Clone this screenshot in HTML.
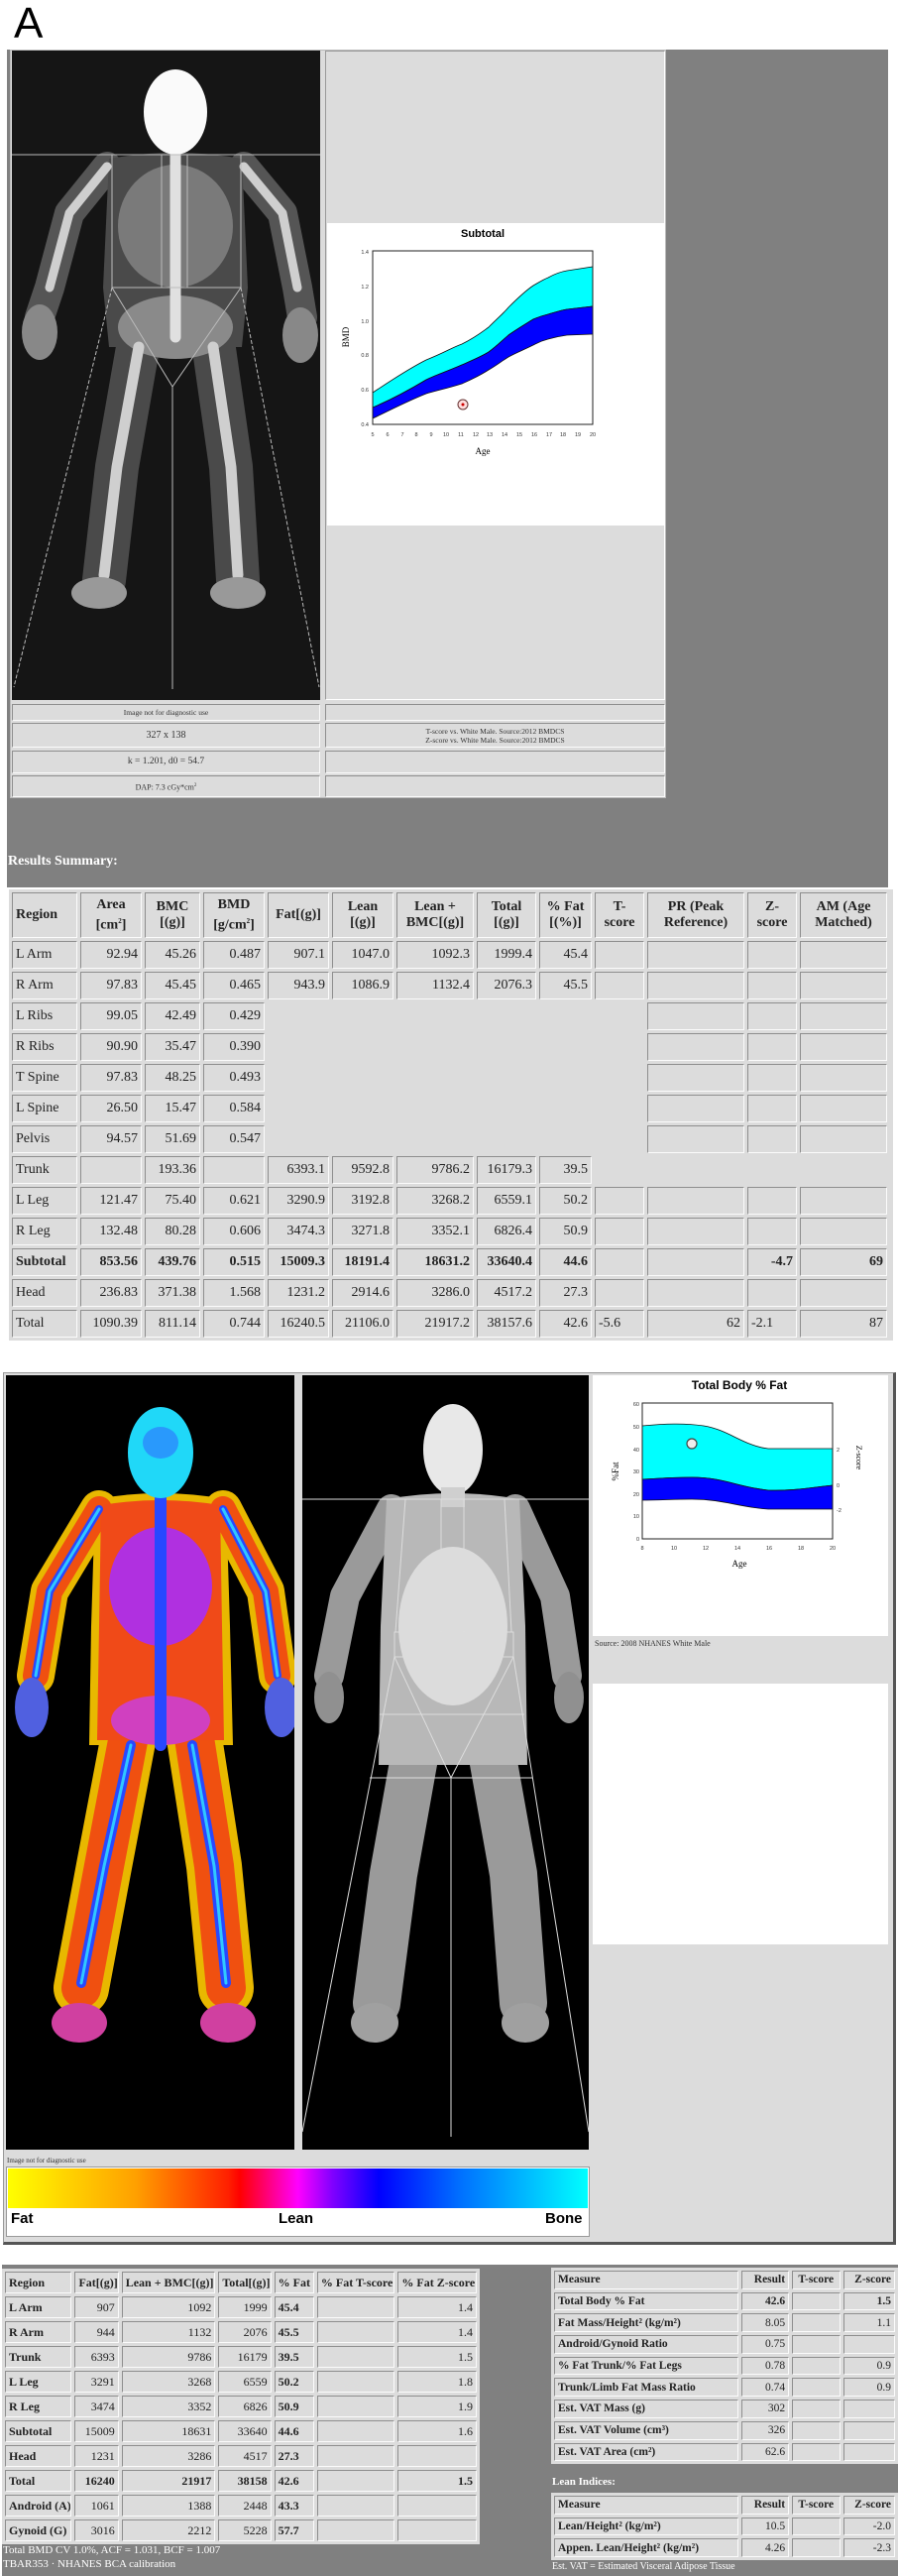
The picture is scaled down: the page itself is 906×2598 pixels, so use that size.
<!DOCTYPE html>
<html><head><meta charset="utf-8">
<style>
*{margin:0;padding:0;box-sizing:border-box}
body{width:906px;height:2598px;background:#fff;position:relative;overflow:hidden;font-family:"Liberation Serif",serif}
.a{position:absolute}
table{border-collapse:separate;border-spacing:3px;table-layout:fixed;background:#dcdcdc}
td{background:#dcdcdc;border:1px solid;border-color:#8e8e8e #fbfbfb #fbfbfb #8e8e8e;padding:0 3px;text-align:right;white-space:nowrap;overflow:hidden}
td.l{text-align:left}
td.c{text-align:center}
td.n{border:none}
.t1 td{font-size:14px;height:28px;color:#222}
.t1 tr.h td{height:46px;font-weight:bold;text-align:center;line-height:16px;white-space:normal}
.t1 tr.b td{font-weight:bold}
.t2 td{font-size:12px;height:22px;color:#222}
.t2 td.l{font-weight:bold}
.t2 tr.h td{font-weight:bold;text-align:left}
.t2 tr.b td{font-weight:bold}
.t3 td{font-size:11.5px;height:18.7px;color:#222}
.t3 td.l{font-weight:bold}
.t3 tr.h td{font-weight:bold}
.cell{position:absolute;background:#dcdcdc;border:1px solid;border-color:#8e8e8e #fbfbfb #fbfbfb #8e8e8e;font-size:9.5px;text-align:center;color:#333;line-height:1.2}
</style></head><body>

<div class="a" style="left:14px;top:2px;font:44px 'Liberation Sans',sans-serif;line-height:44px">A</div>

<!-- section A -->
<div class="a" style="left:7px;top:50px;width:889px;height:845px;background:#808080"></div>
<div class="a" style="left:10px;top:50px;width:662px;height:755px;background:#dcdcdc;border:1px solid #bbb"></div>
<div class="a" style="left:12px;top:51px;width:311px;height:655px;background:#151515"></div>
<div class="a" style="left:328px;top:51px;width:343px;height:655px;background:#dcdcdc;border:1px solid;border-color:#999 #fff #fff #999"></div>
<div class="a" style="left:330px;top:225px;width:340px;height:305px;background:#fff"></div>

<svg class="a" style="left:12px;top:51px" width="311" height="655" viewBox="12 51 311 655">
<g stroke-linecap="round" stroke-linejoin="round" fill="none">
<polyline points="108,168 70,215 50,290 40,320" stroke="#555" stroke-width="30"/>
<polyline points="246,168 285,215 300,290 305,320" stroke="#555" stroke-width="30"/>
<polyline points="140,345 118,471 105,585" stroke="#4a4a4a" stroke-width="44"/>
<polyline points="215,345 233,471 240,585" stroke="#4a4a4a" stroke-width="44"/>
</g>
<path d="M110,160 Q177,148 244,160 L250,290 L244,350 L110,350 L104,290 Z" fill="#4a4a4a"/>
<ellipse cx="177" cy="228" rx="58" ry="62" fill="#7a7a7a"/>
<ellipse cx="177" cy="330" rx="58" ry="32" fill="#8a8a8a"/>
<g stroke-linecap="round" stroke-linejoin="round" fill="none" stroke="#cfcfcf">
<polyline points="108,168 70,215 50,290" stroke-width="9"/>
<polyline points="246,168 285,215 300,290" stroke-width="9"/>
<polyline points="140,350 118,471 105,580" stroke-width="11"/>
<polyline points="215,350 233,471 240,580" stroke-width="11"/>
<line x1="177" y1="157" x2="177" y2="340" stroke-width="11" stroke="#e0e0e0"/>
</g>
<ellipse cx="40" cy="335" rx="18" ry="28" fill="#888"/>
<ellipse cx="303" cy="338" rx="18" ry="28" fill="#888"/>
<ellipse cx="100" cy="598" rx="28" ry="16" fill="#999"/>
<ellipse cx="240" cy="598" rx="28" ry="16" fill="#999"/>
<ellipse cx="177" cy="113" rx="32" ry="43" fill="#fafafa"/>
<g stroke="#bbb" stroke-width="1" fill="none">
<line x1="12" y1="156" x2="323" y2="156"/>
<rect x="113" y="156" width="130" height="134"/>
<line x1="163" y1="156" x2="163" y2="290"/><line x1="189" y1="156" x2="189" y2="290"/>
<polyline points="113,290 174,390 243,290"/>
<line x1="174" y1="390" x2="174" y2="695"/>
<line x1="113" y1="290" x2="14" y2="693" stroke-dasharray="4,2"/>
<line x1="243" y1="290" x2="322" y2="693" stroke-dasharray="4,2"/>
</g>
</svg>

<svg class="a" style="left:330px;top:225px" width="340" height="305" viewBox="330 225 340 305" font-family="Liberation Sans,sans-serif">
<text x="487" y="239" font-size="11" font-weight="bold" text-anchor="middle">Subtotal</text>
<path d="M376,396 C400,380 420,368 430,363 C450,355 455,351 466,347 C480,340 486,335 493,330 C503,320 508,316 513,310 C525,298 532,292 538,288 C545,284 548,282 553,280 C560,276 566,274 572,273 L598,269 L598,309 L572,312 C566,313 560,315 553,317 C545,319 543,320 538,322 C530,327 520,333 513,338 C505,345 500,350 493,355 C485,360 475,364 466,368 C450,375 440,378 430,383 C415,392 395,403 376,411 Z" fill="#00ffff" stroke="#111" stroke-width="0.8"/>
<path d="M376,411 C395,403 415,392 430,383 C440,378 450,375 466,368 C475,364 485,360 493,355 C500,350 505,345 513,338 C520,333 530,327 538,322 C543,320 545,319 553,317 C560,315 566,313 572,312 L598,309 L598,337 L572,338 C565,339 560,340 553,342 C545,344 542,346 538,348 C528,353 520,356 513,360 C505,365 500,369 493,373 C482,380 475,383 466,387 C450,392 440,394 430,397 C410,405 395,413 376,422 Z" fill="#0000ff" stroke="#111" stroke-width="0.8"/>
<rect x="376" y="253" width="222" height="175" fill="none" stroke="#222" stroke-width="1"/>
<circle cx="467" cy="408" r="5" fill="#fdd" stroke="#633" stroke-width="1"/>
<circle cx="467" cy="408" r="1.5" fill="#c00"/>
<g font-size="5.5" fill="#333" text-anchor="end">
<text x="372" y="256">1.4</text><text x="372" y="291">1.2</text><text x="372" y="326">1.0</text><text x="372" y="360">0.8</text><text x="372" y="395">0.6</text><text x="372" y="430">0.4</text>
</g>
<g font-size="5.5" fill="#333" text-anchor="middle">
<text x="376" y="440">5</text><text x="391" y="440">6</text><text x="406" y="440">7</text><text x="420" y="440">8</text><text x="435" y="440">9</text><text x="450" y="440">10</text><text x="465" y="440">11</text><text x="480" y="440">12</text><text x="494" y="440">13</text><text x="509" y="440">14</text><text x="524" y="440">15</text><text x="539" y="440">16</text><text x="554" y="440">17</text><text x="568" y="440">18</text><text x="583" y="440">19</text><text x="598" y="440">20</text>
</g>
<text x="487" y="458" font-size="9" text-anchor="middle" font-family="Liberation Serif,serif">Age</text>
<text x="352" y="340" font-size="9" text-anchor="middle" transform="rotate(-90 352 340)" font-family="Liberation Serif,serif">BMD</text>
</svg>

<div class="cell" style="left:12px;top:710px;width:311px;height:17px;font-size:7.5px;line-height:15px">Image not for diagnostic use</div>
<div class="cell" style="left:328px;top:710px;width:343px;height:17px"></div>
<div class="cell" style="left:12px;top:729px;width:311px;height:25px;font-size:10px;line-height:23px">327 x 138</div>
<div class="cell" style="left:328px;top:729px;width:343px;height:25px;font-size:7.5px;padding-top:3px;line-height:9px">T-score vs. White Male. Source:2012 BMDCS<br>Z-score vs. White Male. Source:2012 BMDCS</div>
<div class="cell" style="left:12px;top:757px;width:311px;height:23px;font-size:9.5px;line-height:21px">k = 1.201, d0 = 54.7</div>
<div class="cell" style="left:328px;top:757px;width:343px;height:23px"></div>
<div class="cell" style="left:12px;top:782px;width:311px;height:22px;font-size:8px;line-height:20px">DAP: 7.3 cGy*cm<sup style="font-size:5px">2</sup></div>
<div class="cell" style="left:328px;top:782px;width:343px;height:22px"></div>

<div class="a" style="left:8px;top:861px;color:#fff;font-size:14px;font-weight:bold">Results Summary:</div>

<table class="a t1" style="left:9px;top:897px;width:887px">
<colgroup><col style="width:66px"><col style="width:62px"><col style="width:56px"><col style="width:62px"><col style="width:62px"><col style="width:62px"><col style="width:78px"><col style="width:60px"><col style="width:53px"><col style="width:50px"><col style="width:98px"><col style="width:50px"><col style="width:88px"></colgroup>
<tr class="h"><td class="l" style="text-align:left">Region</td><td>Area [cm<sup style="font-size:7px">2</sup>]</td><td>BMC [(g)]</td><td>BMD [g/cm<sup style="font-size:7px">2</sup>]</td><td>Fat[(g)]</td><td>Lean [(g)]</td><td>Lean + BMC[(g)]</td><td>Total [(g)]</td><td>% Fat [(%)]</td><td>T-score</td><td>PR (Peak Reference)</td><td>Z-score</td><td>AM (Age Matched)</td></tr>
<tr><td class="l">L Arm</td><td>92.94</td><td>45.26</td><td>0.487</td><td>907.1</td><td>1047.0</td><td>1092.3</td><td>1999.4</td><td>45.4</td><td></td><td></td><td></td><td></td></tr>
<tr><td class="l">R Arm</td><td>97.83</td><td>45.45</td><td>0.465</td><td>943.9</td><td>1086.9</td><td>1132.4</td><td>2076.3</td><td>45.5</td><td></td><td></td><td></td><td></td></tr>
<tr><td class="l">L Ribs</td><td>99.05</td><td>42.49</td><td>0.429</td><td class="n" colspan="6"></td><td></td><td></td><td></td><td></td></tr>
<tr><td class="l">R Ribs</td><td>90.90</td><td>35.47</td><td>0.390</td><td class="n" colspan="6"></td><td></td><td></td><td></td><td></td></tr>
<tr><td class="l">T Spine</td><td>97.83</td><td>48.25</td><td>0.493</td><td class="n" colspan="6"></td><td></td><td></td><td></td><td></td></tr>
<tr><td class="l">L Spine</td><td>26.50</td><td>15.47</td><td>0.584</td><td class="n" colspan="6"></td><td></td><td></td><td></td><td></td></tr>
<tr><td class="l">Pelvis</td><td>94.57</td><td>51.69</td><td>0.547</td><td class="n" colspan="6"></td><td></td><td></td><td></td><td></td></tr>
<tr><td class="l">Trunk</td><td></td><td>193.36</td><td></td><td>6393.1</td><td>9592.8</td><td>9786.2</td><td>16179.3</td><td>39.5</td><td class="n" colspan="4"></td></tr>
<tr><td class="l">L Leg</td><td>121.47</td><td>75.40</td><td>0.621</td><td>3290.9</td><td>3192.8</td><td>3268.2</td><td>6559.1</td><td>50.2</td><td></td><td></td><td></td><td></td></tr>
<tr><td class="l">R Leg</td><td>132.48</td><td>80.28</td><td>0.606</td><td>3474.3</td><td>3271.8</td><td>3352.1</td><td>6826.4</td><td>50.9</td><td></td><td></td><td></td><td></td></tr>
<tr class="b"><td class="l">Subtotal</td><td>853.56</td><td>439.76</td><td>0.515</td><td>15009.3</td><td>18191.4</td><td>18631.2</td><td>33640.4</td><td>44.6</td><td></td><td></td><td>-4.7</td><td>69</td></tr>
<tr><td class="l">Head</td><td>236.83</td><td>371.38</td><td>1.568</td><td>1231.2</td><td>2914.6</td><td>3286.0</td><td>4517.2</td><td>27.3</td><td></td><td></td><td></td><td></td></tr>
<tr><td class="l">Total</td><td>1090.39</td><td>811.14</td><td>0.744</td><td>16240.5</td><td>21106.0</td><td>21917.2</td><td>38157.6</td><td>42.6</td><td class="l">-5.6</td><td>62</td><td class="l">-2.1</td><td>87</td></tr>
</table>

<!-- section 2 -->
<div class="a" style="left:3px;top:1384px;width:901px;height:880px;background:#dcdcdc;border:1px solid #999;border-bottom:3px solid #555;border-right:3px solid #555"></div>
<div class="a" style="left:6px;top:1387px;width:291px;height:781px;background:#000"></div>
<div class="a" style="left:305px;top:1387px;width:289px;height:781px;background:#000"></div>
<div class="a" style="left:598px;top:1387px;width:298px;height:263px;background:#fff"></div>
<div class="a" style="left:598px;top:1698px;width:298px;height:263px;background:#fff"></div>
<div class="a" style="left:600px;top:1653px;font-size:8px;color:#333">Source: 2008 NHANES White Male</div>

<svg class="a" style="left:6px;top:1387px" width="291" height="781" viewBox="6 1387 291 781">
<g stroke-linecap="round" stroke-linejoin="round" fill="none" stroke="#e8b800">
<polyline points="100,1522 50,1605 36,1690" stroke-width="38"/>
<polyline points="225,1522 268,1605 280,1690" stroke-width="38"/>
<polyline points="132,1740 105,1882 82,2005" stroke-width="56"/>
<polyline points="194,1740 216,1882 228,2005" stroke-width="56"/>
</g>
<path d="M96,1512 Q162,1500 228,1512 L232,1640 L235,1760 L90,1760 L92,1640 Z" fill="#e8b800"/>
<g stroke-linecap="round" stroke-linejoin="round" fill="none" stroke="#f05010">
<polyline points="100,1522 50,1605 36,1690" stroke-width="26"/>
<polyline points="225,1522 268,1605 280,1690" stroke-width="26"/>
<polyline points="132,1740 105,1882 82,2005" stroke-width="40"/>
<polyline points="194,1740 216,1882 228,2005" stroke-width="40"/>
</g>
<path d="M102,1518 Q162,1508 222,1518 L224,1640 L226,1755 L98,1755 L100,1640 Z" fill="#f04a18"/>
<ellipse cx="162" cy="1600" rx="52" ry="60" fill="#b030e0"/>
<ellipse cx="162" cy="1735" rx="50" ry="25" fill="#d040c0"/>
<g stroke-linecap="round" stroke-linejoin="round" fill="none" stroke="#2848ff">
<line x1="162" y1="1510" x2="162" y2="1760" stroke-width="12"/>
<polyline points="100,1522 50,1605 36,1690" stroke-width="8"/>
<polyline points="225,1522 268,1605 280,1690" stroke-width="8"/>
<polyline points="132,1760 105,1882 82,2000" stroke-width="10"/>
<polyline points="194,1760 216,1882 228,2000" stroke-width="10"/>
</g>
<g stroke="#30c8ff" stroke-width="3" fill="none" stroke-linecap="round">
<polyline points="100,1522 50,1605 36,1690"/><polyline points="225,1522 268,1605 280,1690"/>
<polyline points="132,1760 105,1882 82,2000"/><polyline points="194,1760 216,1882 228,2000"/>
</g>
<ellipse cx="32" cy="1722" rx="17" ry="30" fill="#5060e0"/>
<ellipse cx="284" cy="1722" rx="17" ry="30" fill="#5060e0"/>
<ellipse cx="80" cy="2040" rx="28" ry="20" fill="#d040a0"/>
<ellipse cx="230" cy="2040" rx="28" ry="20" fill="#d040a0"/>
<ellipse cx="162" cy="1465" rx="33" ry="46" fill="#20d8f8"/>
<ellipse cx="162" cy="1455" rx="18" ry="16" fill="#3070ff" opacity="0.6"/>
</svg>

<svg class="a" style="left:305px;top:1387px" width="289" height="781" viewBox="305 1387 289 781">
<g stroke-linecap="round" stroke-linejoin="round" fill="none" stroke="#9a9a9a">
<polyline points="395,1522 348,1610 332,1690" stroke-width="30"/>
<polyline points="520,1522 560,1610 572,1690" stroke-width="30"/>
<polyline points="422,1750 397,1890 380,2020" stroke-width="48"/>
<polyline points="493,1750 518,1890 528,2020" stroke-width="48"/>
</g>
<path d="M390,1512 Q457,1500 524,1512 L530,1640 L532,1780 L382,1780 L384,1640 Z" fill="#b8b8b8"/>
<ellipse cx="457" cy="1640" rx="55" ry="80" fill="#dcdcdc"/>
<ellipse cx="332" cy="1712" rx="15" ry="26" fill="#909090"/>
<ellipse cx="574" cy="1712" rx="15" ry="26" fill="#909090"/>
<ellipse cx="378" cy="2040" rx="24" ry="20" fill="#a0a0a0"/>
<ellipse cx="530" cy="2040" rx="24" ry="20" fill="#a0a0a0"/>
<ellipse cx="457" cy="1462" rx="30" ry="46" fill="#e8e8e8"/>
<rect x="445" y="1500" width="24" height="20" fill="#cfcfcf"/>
<g stroke="#ddd" stroke-width="1" fill="none">
<line x1="305" y1="1512" x2="594" y2="1512"/>
<line x1="409" y1="1512" x2="399" y2="1646"/><line x1="509" y1="1512" x2="516" y2="1646"/>
<line x1="445" y1="1512" x2="445" y2="1646"/><line x1="468" y1="1512" x2="468" y2="1646"/>
<rect x="398" y="1646" width="120" height="25"/>
<polyline points="398,1671 455,1793 518,1671"/>
<line x1="383" y1="1729" x2="529" y2="1729"/>
<line x1="373" y1="1793" x2="537" y2="1793"/>
<line x1="455" y1="1793" x2="455" y2="2155"/>
<line x1="398" y1="1671" x2="305" y2="2150"/>
<line x1="518" y1="1671" x2="594" y2="2150"/>
</g>
</svg>

<svg class="a" style="left:598px;top:1387px" width="298" height="263" viewBox="598 1387 298 263" font-family="Liberation Sans,sans-serif">
<text x="746" y="1401" font-size="12" font-weight="bold" text-anchor="middle">Total Body % Fat</text>
<path d="M648,1438 C670,1436 690,1435 710,1438 C735,1442 750,1458 775,1461 L840,1461 L840,1498 C820,1500 800,1504 775,1503 C745,1500 730,1490 698,1490 C680,1490 665,1491 648,1492 Z" fill="#00ffff" stroke="#111" stroke-width="0.8"/>
<path d="M648,1492 C665,1491 680,1490 698,1490 C730,1490 745,1500 775,1503 C800,1504 820,1500 840,1498 L840,1522 L775,1522 C745,1520 730,1512 698,1512 C680,1512 665,1513 648,1513 Z" fill="#0000ff" stroke="#111" stroke-width="0.8"/>
<rect x="648" y="1415" width="192" height="137" fill="none" stroke="#222" stroke-width="1"/>
<circle cx="698" cy="1456" r="5" fill="#eee" stroke="#444" stroke-width="1.2"/>
<g font-size="5.5" fill="#333" text-anchor="end">
<text x="645" y="1418">60</text><text x="645" y="1441">50</text><text x="645" y="1464">40</text><text x="645" y="1486">30</text><text x="645" y="1509">20</text><text x="645" y="1531">10</text><text x="645" y="1554">0</text>
</g>
<g font-size="5.5" fill="#333">
<text x="844" y="1464">2</text><text x="844" y="1500">0</text><text x="844" y="1525">-2</text>
</g>
<g font-size="5.5" fill="#333" text-anchor="middle">
<text x="648" y="1563">8</text><text x="680" y="1563">10</text><text x="712" y="1563">12</text><text x="744" y="1563">14</text><text x="776" y="1563">16</text><text x="808" y="1563">18</text><text x="840" y="1563">20</text>
</g>
<text x="746" y="1580" font-size="9" text-anchor="middle" font-family="Liberation Serif,serif">Age</text>
<text x="624" y="1484" font-size="9" text-anchor="middle" transform="rotate(-90 624 1484)" font-family="Liberation Serif,serif">%Fat</text>
<text x="864" y="1470" font-size="8" text-anchor="middle" transform="rotate(90 864 1470)" font-family="Liberation Serif,serif">Z-score</text>
</svg>

<div class="a" style="left:7px;top:2175px;font-size:7px;color:#333">Image not for diagnostic use</div>
<div class="a" style="left:6px;top:2185px;width:589px;height:71px;background:#fff;border:1px solid #999"></div>
<div class="a" style="left:8px;top:2187px;width:585px;height:40px;background:linear-gradient(to right,#ffff00 0%,#ffa000 22%,#ff2000 38%,#ff0000 40%,#ff00ff 50%,#8000ff 56%,#0000ff 64%,#0070ff 78%,#00ffff 100%)"></div>
<div class="a" style="left:11px;top:2229px;font:bold 15px 'Liberation Sans',sans-serif">Fat</div>
<div class="a" style="left:281px;top:2229px;font:bold 15px 'Liberation Sans',sans-serif">Lean</div>
<div class="a" style="left:550px;top:2229px;font:bold 15px 'Liberation Sans',sans-serif">Bone</div>

<!-- bottom -->
<div class="a" style="left:2px;top:2284px;width:904px;height:314px;background:#808080"></div>
<table class="a t2" style="left:2px;top:2288px;width:482px">
<colgroup><col style="width:67px"><col style="width:44px"><col style="width:94px"><col style="width:53px"><col style="width:40px"><col style="width:78px"><col style="width:79px"></colgroup>
<tr class="h"><td>Region</td><td>Fat[(g)]</td><td>Lean + BMC[(g)]</td><td>Total[(g)]</td><td>% Fat</td><td>% Fat T-score</td><td>% Fat Z-score</td></tr>
<tr><td class="l">L Arm</td><td>907</td><td>1092</td><td>1999</td><td class="l">45.4</td><td></td><td>1.4</td></tr>
<tr><td class="l">R Arm</td><td>944</td><td>1132</td><td>2076</td><td class="l">45.5</td><td></td><td>1.4</td></tr>
<tr><td class="l">Trunk</td><td>6393</td><td>9786</td><td>16179</td><td class="l">39.5</td><td></td><td>1.5</td></tr>
<tr><td class="l">L Leg</td><td>3291</td><td>3268</td><td>6559</td><td class="l">50.2</td><td></td><td>1.8</td></tr>
<tr><td class="l">R Leg</td><td>3474</td><td>3352</td><td>6826</td><td class="l">50.9</td><td></td><td>1.9</td></tr>
<tr><td class="l">Subtotal</td><td>15009</td><td>18631</td><td>33640</td><td class="l">44.6</td><td></td><td>1.6</td></tr>
<tr><td class="l">Head</td><td>1231</td><td>3286</td><td>4517</td><td class="l">27.3</td><td></td><td></td></tr>
<tr class="b"><td class="l">Total</td><td>16240</td><td>21917</td><td>38158</td><td class="l">42.6</td><td></td><td>1.5</td></tr>
<tr><td class="l">Android (A)</td><td>1061</td><td>1388</td><td>2448</td><td class="l">43.3</td><td></td><td></td></tr>
<tr><td class="l">Gynoid (G)</td><td>3016</td><td>2212</td><td>5228</td><td class="l">57.7</td><td></td><td></td></tr>
</table>
<div class="a" style="left:3px;top:2565px;font-size:11px;color:#fff;line-height:14px">Total BMD CV 1.0%, ACF = 1.031, BCF = 1.007<br>TBAR353 · NHANES BCA calibration</div>

<table class="a t3" style="left:556px;top:2287px;width:350px">
<colgroup><col style="width:184px"><col style="width:48px"><col style="width:48px"><col style="width:52px"></colgroup>
<tr class="h"><td class="l">Measure</td><td>Result</td><td class="c">T-score</td><td>Z-score</td></tr>
<tr><td class="l">Total Body % Fat</td><td><b>42.6</b></td><td></td><td><b>1.5</b></td></tr>
<tr><td class="l">Fat Mass/Height² (kg/m²)</td><td>8.05</td><td></td><td>1.1</td></tr>
<tr><td class="l">Android/Gynoid Ratio</td><td>0.75</td><td></td><td></td></tr>
<tr><td class="l">% Fat Trunk/% Fat Legs</td><td>0.78</td><td></td><td>0.9</td></tr>
<tr><td class="l">Trunk/Limb Fat Mass Ratio</td><td>0.74</td><td></td><td>0.9</td></tr>
<tr><td class="l">Est. VAT Mass (g)</td><td>302</td><td></td><td></td></tr>
<tr><td class="l">Est. VAT Volume (cm³)</td><td>326</td><td></td><td></td></tr>
<tr><td class="l">Est. VAT Area (cm²)</td><td>62.6</td><td></td><td></td></tr>
</table>
<div class="a" style="left:557px;top:2497px;font-size:11px;color:#fff;font-weight:bold">Lean Indices:</div>
<table class="a t3" style="left:556px;top:2514px;width:350px">
<colgroup><col style="width:184px"><col style="width:48px"><col style="width:48px"><col style="width:52px"></colgroup>
<tr class="h"><td class="l">Measure</td><td>Result</td><td class="c">T-score</td><td>Z-score</td></tr>
<tr><td class="l">Lean/Height² (kg/m²)</td><td>10.5</td><td></td><td>-2.0</td></tr>
<tr><td class="l">Appen. Lean/Height² (kg/m²)</td><td>4.26</td><td></td><td>-2.3</td></tr>
</table>
<div class="a" style="left:557px;top:2583px;font-size:10px;color:#fff">Est. VAT = Estimated Visceral Adipose Tissue</div>
</body></html>
